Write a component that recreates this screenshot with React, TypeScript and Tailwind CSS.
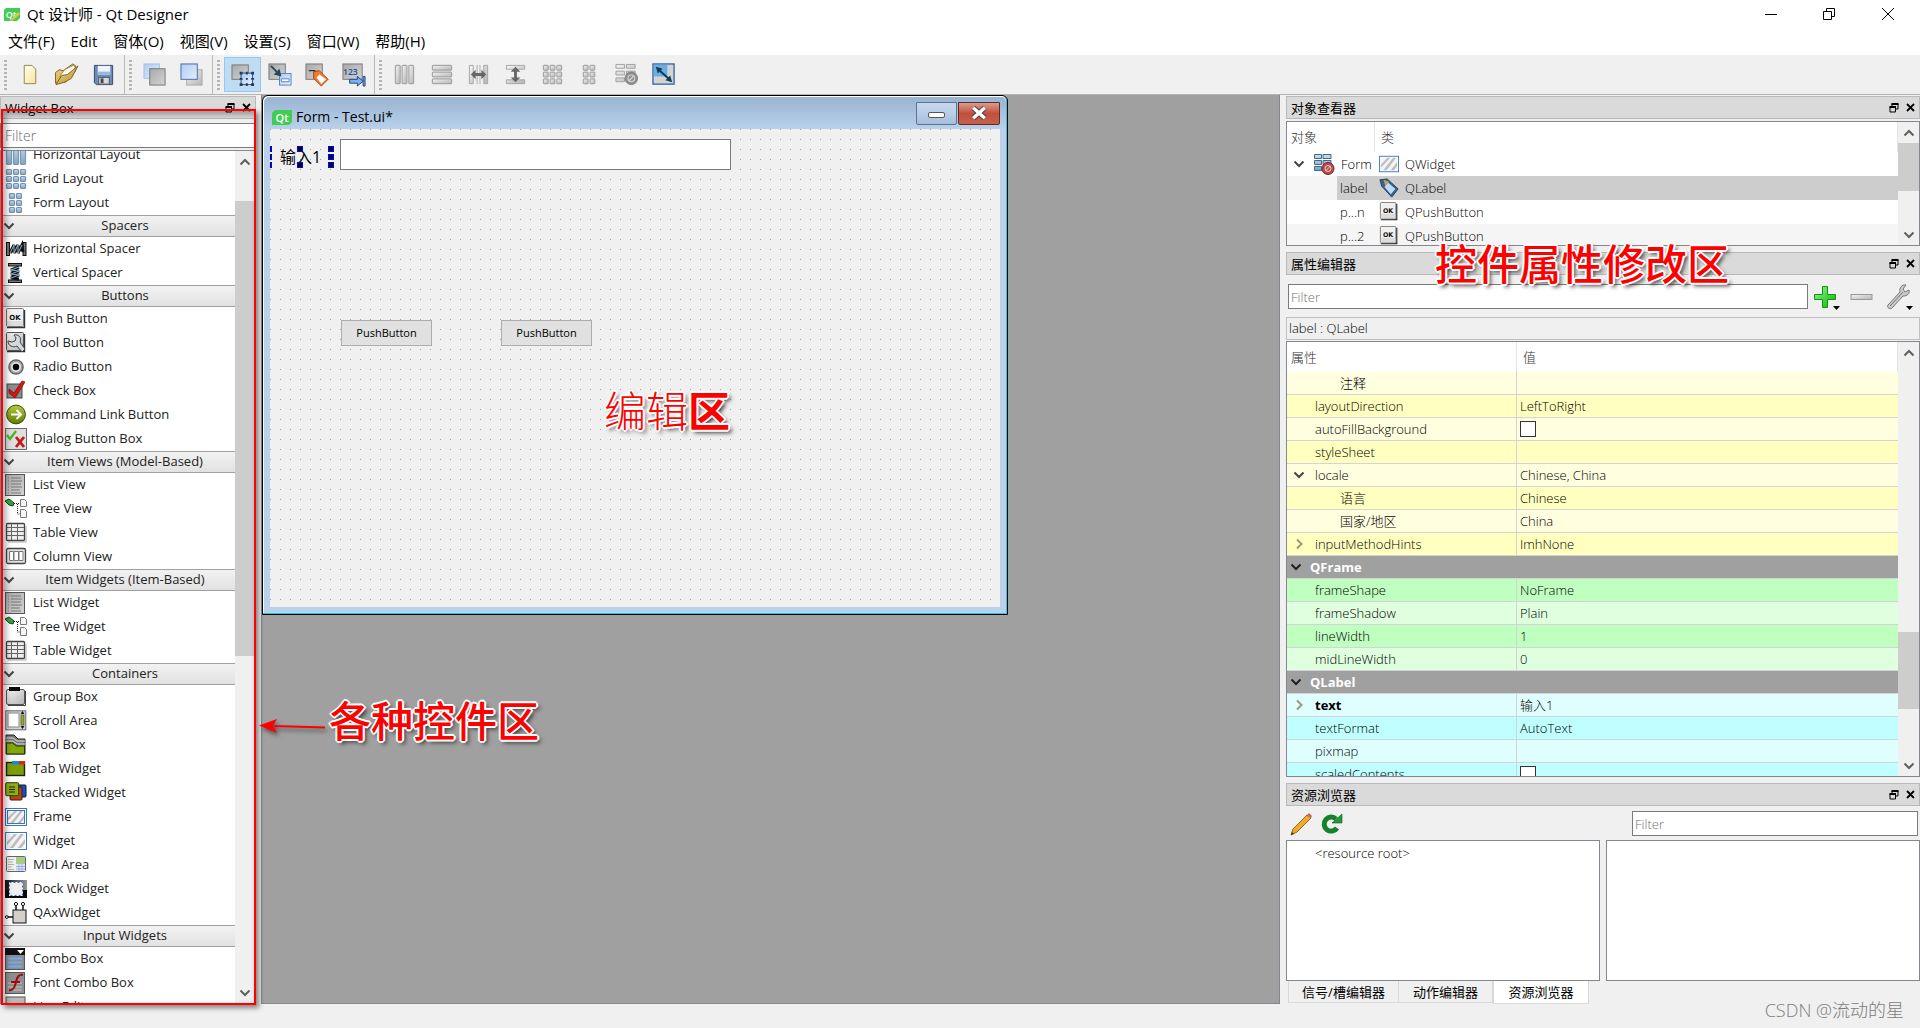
import React from "react";

type IconProps = { children: React.ReactNode; size?: string; box?: string };

const Svg = ({ children, size = "w-[22px] h-[22px]", box = "0 0 22 22" }: IconProps) => (
  <svg className={`${size} shrink-0`} viewBox={box} aria-hidden="true">
    {children}
  </svg>
);

const Gradients = () => (
  <svg className="absolute w-0 h-0" aria-hidden="true">
    <defs>
      <linearGradient id="gray" x1="0" y1="0" x2="1" y2="1">
        <stop offset="0" stopColor="#f4f4f4" />
        <stop offset="1" stopColor="#b4b4b4" />
      </linearGradient>
      <linearGradient id="mid" x1="0" y1="0" x2="1" y2="1">
        <stop offset="0" stopColor="#a8a8a8" />
        <stop offset="1" stopColor="#d4d4d4" />
      </linearGradient>
      <linearGradient id="blue" x1="0" y1="0" x2="1" y2="1">
        <stop offset="0" stopColor="#aecbf5" />
        <stop offset="1" stopColor="#e3efff" />
      </linearGradient>
      <linearGradient id="steel" x1="0" y1="0" x2="0" y2="1">
        <stop offset="0" stopColor="#c5ddef" />
        <stop offset="1" stopColor="#7fa3c4" />
      </linearGradient>
      <linearGradient id="page" x1="0" y1="0" x2="1" y2="1">
        <stop offset="0" stopColor="#fffef0" />
        <stop offset="1" stopColor="#f6e79a" />
      </linearGradient>
      <linearGradient id="gold" x1="0" y1="0" x2="1" y2="1">
        <stop offset="0" stopColor="#f5dc92" />
        <stop offset="1" stopColor="#b88a2c" />
      </linearGradient>
      <linearGradient id="lime" x1="0" y1="0" x2="0" y2="1">
        <stop offset="0" stopColor="#b3cc3a" />
        <stop offset="1" stopColor="#5f7d00" />
      </linearGradient>
      <linearGradient id="plus" x1="0" y1="0" x2="1" y2="1">
        <stop offset="0" stopColor="#9df58d" />
        <stop offset="1" stopColor="#00b400" />
      </linearGradient>
      <linearGradient id="dockbar" x1="0" y1="0" x2="1" y2="0">
        <stop offset="0" stopColor="#111" />
        <stop offset="1" stopColor="#999" />
      </linearGradient>
    </defs>
  </svg>
);

const Cells = ({ cols, rows, fill, stroke }: { cols: number; rows: number; fill: string; stroke: string }) => {
  const w = cols === 1 ? 20 : 5;
  const h = rows === 1 ? 19 : 5;
  const x0 = cols === 2 ? 4.5 : 1.5;
  const out: React.ReactNode[] = [];
  for (let c = 0; c < cols; c++)
    for (let r = 0; r < rows; r++)
      out.push(
        <rect key={`${c}-${r}`} x={x0 + c * 7} y={1.5 + r * 7} width={w} height={h} rx="1" fill={fill} stroke={stroke} strokeWidth="1.2" />,
      );
  return <>{out}</>;
};

const Stripes = ({ x, y, w, h }: { x: number; y: number; w: number; h: number }) => (
  <>
    <rect x={x} y={y} width={w} height={h} fill="#f4f4f4" />
    <path
      d={`M${x} ${y + h * 0.55}L${x + w * 0.4} ${y}h${w * 0.18}L${x} ${y + h * 0.8}zM${x + w * 0.15} ${y + h}L${x + w * 0.75} ${y}H${x + w * 0.93}L${x + w * 0.35} ${y + h}zM${x + w * 0.6} ${y + h}L${x + w} ${y + h * 0.35}V${y + h * 0.65}L${x + w * 0.8} ${y + h}z`}
      fill="#bdbdbd"
    />
  </>
);

const Icon = ({ name, size }: { name: string; size?: string }) => {
  const S = (c: React.ReactNode) => <Svg size={size}>{c}</Svg>;
  switch (name) {
    case "hlayout":
      return S(<Cells cols={3} rows={1} fill="url(#steel)" stroke="#7d97b3" />);
    case "grid":
      return S(<Cells cols={3} rows={3} fill="url(#steel)" stroke="#7690ae" />);
    case "form":
      return S(<Cells cols={2} rows={3} fill="url(#steel)" stroke="#7690ae" />);
    case "hspacer":
      return S(
        <>
          <rect x="1.5" y="4.5" width="3" height="13" fill="#777" stroke="#111" />
          <rect x="18" y="4.5" width="3" height="13" fill="#777" stroke="#111" />
          <path d="M5 15L9 7L9 15L13 7L13 15L17 7L18 14" fill="none" stroke="#111" strokeWidth="3" />
          <path d="M5 15L9 7L9 15L13 7L13 15L17 7" fill="none" stroke="#9db4c6" strokeWidth="1" />
        </>,
      );
    case "vspacer":
      return S(
        <>
          <rect x="3.5" y="1.5" width="13" height="2.5" fill="#777" stroke="#111" />
          <rect x="3.5" y="18" width="13" height="2.5" fill="#777" stroke="#111" />
          <path d="M14 5L6 8L14 9L6 12L14 13L6 16L14 17" fill="none" stroke="#111" strokeWidth="3" />
          <path d="M14 5L6 8L14 9L6 12L14 13L6 16" fill="none" stroke="#8fb3d0" strokeWidth="1" />
        </>,
      );
    case "push":
      return S(
        <>
          <path d="M2 19.500H19.500V2" fill="none" stroke="#333" strokeWidth="1.4" />
          <rect x="1.5" y=".5" width="17" height="18" rx="1" fill="#f0f0f0" stroke="#777" />
          <path d="M2 13h16v5H2z" fill="#dcdcdc" />
          <text x="10" y="12" fontSize="7" fontWeight="700" textAnchor="middle" fontFamily="DejaVu Sans" fill="#111">OK</text>
        </>,
      );
    case "tool":
      return S(
        <>
          <path d="M2 19.500H19.500V2" fill="none" stroke="#333" strokeWidth="1.4" />
          <rect x="1.5" y=".5" width="17" height="18" rx="1" fill="url(#gray)" stroke="#555" />
          <path d="M9 3c4-1 8 2 6 7l5 7-3 3-5-6c-4 2-9 0-9-5l4 1 3-1 1-3z" fill="#d3d9de" stroke="#444" />
        </>,
      );
    case "radio":
      return S(
        <>
          <circle cx="11" cy="11" r="7" fill="#e0e0e0" stroke="#666" strokeWidth="1.6" />
          <circle cx="11" cy="11" r="5.6" fill="none" stroke="#999" />
          <circle cx="11" cy="11" r="3.2" fill="#050505" />
        </>,
      );
    case "check":
      return S(
        <>
          <rect x="2" y="4" width="15" height="14" fill="#8c8c8c" stroke="#444" />
          <path d="M4 9l5 4L17 1l3 1L10 18 4 13z" fill="#d81515" stroke="#7c0909" strokeWidth=".7" />
        </>,
      );
    case "command":
      return S(
        <>
          <circle cx="11" cy="10.5" r="9.4" fill="url(#lime)" stroke="#3c4d08" />
          <path d="M6 10.500h9M11.500 6L16 10.500l-4.500 4.500" fill="none" stroke="#fff" strokeWidth="2" />
        </>,
      );
    case "dialog":
      return S(
        <>
          <rect x=".5" y=".5" width="21" height="21" fill="#dedede" stroke="#6b6b6b" />
          <path d="M2 7l3 4L11 3" fill="none" stroke="#51b52d" strokeWidth="2.400" />
          <path d="M11 9l8 10M19 9l-8 10" stroke="#c61a1a" strokeWidth="2.800" />
        </>,
      );
    case "list":
      return S(
        <>
          <rect x=".5" y=".5" width="19" height="21" fill="url(#mid)" stroke="#555" />
          <path d="M3 4h1M3 7h1M3 10h1M3 13h1M3 16h1M3 19h1M6 4h10M6 7h11M6 10h10M6 13h11M6 16h9M6 19h10" stroke="#777" />
        </>,
      );
    case "tree":
      return S(
        <>
          <path d="M0 3l4-2 5 4-1 3-4-1z" fill="#3f9f41" stroke="#0e4b10" />
          <path d="M9 5.500h6M12.500 6v10H16" fill="none" stroke="#222" strokeDasharray="1 1" />
          <path d="M15.500 1.500h4l2 2v5h-6zM15.500 11.500h4l2 2v6h-6z" fill="#f5f5f5" stroke="#777" />
        </>,
      );
    case "table":
      return S(
        <>
          <rect x="1.500" y="1.500" width="18" height="17" rx="1" fill="#eee" stroke="#444" strokeWidth="1.300" />
          <path d="M2 5.500h17M2 9.500h17M2 13.500h17M6.500 2v16M12.500 2v16" stroke="#666" />
          <path d="M3 20h18V4" fill="none" stroke="#aaa" />
        </>,
      );
    case "column":
      return S(
        <>
          <rect x="1.500" y="2.500" width="19" height="15" rx="1.500" fill="#e4e4e4" stroke="#444" strokeWidth="1.300" />
          <path d="M4.500 5.500h4v9h-4zM9 5.500h4.500v9H9zM14 5.500h4v9h-4z" fill="#fff" stroke="#777" />
        </>,
      );
    case "group":
      return S(
        <>
          <rect x="1.500" y="3.500" width="18" height="15" rx="1.500" fill="url(#gray)" stroke="#555" />
          <path d="M3 19.500h17.500V5" fill="none" stroke="#444" />
          <rect x="4" y="1" width="11" height="4" fill="#080808" />
        </>,
      );
    case "scroll":
      return S(
        <>
          <rect x=".8" y=".8" width="20" height="19" fill="#d5d5d5" stroke="#666" />
          <rect x="3" y="3" width="11" height="14" fill="#fff" stroke="#888" />
          <rect x="16" y="5" width="3" height="10" fill="#8bb320" stroke="#444" strokeWidth=".6" />
          <path d="M17.500 1l2 3h-4zM17.500 19l2-3h-4z" fill="#111" />
        </>,
      );
    case "toolbox":
      return S(
        <>
          <path d="M1 1h8l4 4h7v15H1z" fill="#777" stroke="#222" />
          <path d="M1 4h7l4 3h8M1 7h7l4 3h8" fill="none" stroke="#ddd" />
          <path d="M1.500 9h6l4 3h8v8h-18z" fill="#83a60a" stroke="#26330a" />
        </>,
      );
    case "tab":
      return S(
        <>
          <rect x="1.500" y="4.500" width="18" height="13" fill="#7f9f08" stroke="#1c2503" strokeWidth="1.400" />
          <rect x="7" y="3" width="7" height="3.500" fill="#168bd3" />
          <rect x="14" y="3" width="6" height="3.500" fill="#d22" />
        </>,
      );
    case "stacked":
      return S(
        <>
          <rect x="9" y="3" width="12" height="12" rx="1" fill="#1c4fc0" stroke="#06163e" />
          <rect x="5" y="5" width="12" height="13" rx="1" fill="#b44713" stroke="#43190a" />
          <rect x=".7" y=".7" width="13" height="13" rx="1" fill="#8eae17" stroke="#2b3906" />
          <path d="M4 5h6M4 7.500h6M4 10h6" stroke="#1c2600" strokeWidth="1.200" />
        </>,
      );
    case "frame":
      return S(
        <>
          <rect x=".5" y="2.500" width="21" height="17" fill="#fff" stroke="#3a76c4" />
          <rect x="2.500" y="4.500" width="17" height="13" fill="#fff" stroke="#3a76c4" />
          <Stripes x={3} y={5} w={16} h={12} />
        </>,
      );
    case "widget":
      return S(
        <>
          <rect x=".5" y="2.500" width="21" height="17" fill="#fff" stroke="#3a76c4" />
          <Stripes x={2} y={4} w={18} h={14} />
        </>,
      );
    case "mdi":
      return S(
        <>
          <rect x="1.500" y="2.500" width="19" height="15" rx="1" fill="#f0f0f0" stroke="#666" />
          <rect x="11" y="3" width="9" height="7" fill="#a7cf81" />
          <rect x="11" y="10" width="9" height="7" fill="#dfeaff" />
          <path d="M11 12.500h9M11 15h9M14 10v7M17 10v7" stroke="#86a8e0" strokeWidth=".8" />
          <path d="M3 5.500h6M3 8h5M3 10.500h6M3 13h4M3 15.500h6" stroke="#b5b5b5" />
        </>,
      );
    case "dock":
      return S(
        <>
          <rect x="0" y="2" width="22" height="18" fill="url(#dockbar)" />
          <path d="M0 12h22v8H0z" fill="#0a0a0a" />
          <rect x="4.500" y="4.500" width="13" height="13" fill="#eee" stroke="#fff" />
          <rect x="4.500" y="4.500" width="13" height="13" fill="none" stroke="#2f6fc1" strokeDasharray="2 2" />
        </>,
      );
    case "qax":
      return S(
        <>
          <rect x="8" y="8" width="13" height="13" fill="#d4d0c8" stroke="#111" />
          <circle cx="11" cy="2" r="1.600" fill="#fff" stroke="#111" />
          <circle cx="18" cy="2" r="1.600" fill="#fff" stroke="#111" />
          <circle cx="1.800" cy="15" r="1.400" fill="#fff" stroke="#111" />
          <path d="M11 4v4M18 4v4M3 15h5" stroke="#111" strokeWidth="1.500" />
        </>,
      );
    case "combo":
      return S(
        <>
          <rect x=".5" y=".5" width="19" height="21" fill="#8a8f96" stroke="#555" />
          <path d="M0 0h20v7H0z" fill="#111" />
          <path d="M12 2h7l-3.500 4z" fill="#fff" />
          <path d="M3 10.500h14M3 14.500h14M3 18.500h14" stroke="#78a9e6" strokeWidth="2" />
        </>,
      );
    case "fontcombo":
      return S(
        <>
          <rect x=".5" y=".5" width="19" height="21" fill="#8f8f8f" stroke="#555" />
          <path d="M3 11h14M3 15h14M3 18h14" stroke="#c4c4c4" />
          <path d="M18 3c-4-1-6 2-7 7s-3 9-7 8M6 10h9" fill="none" stroke="#a30b0b" strokeWidth="2" />
        </>,
      );
    case "line":
      return S(<rect x="1" y="1" width="19" height="18" fill="#bbb" stroke="#555" />);
    case "brokenlayout":
      return S(
        <>
          <path d="M1.500 1.500h7v4h-7zM10 1.500h8v4h-8zM1.500 7.500h7v4h-7zM10 7.500h8v4h-8zM1.500 13.500h7v4h-7z" fill="url(#steel)" stroke="#45678c" />
          <circle cx="15" cy="15.5" r="6" fill="#b94a48" stroke="#7c2220" />
          <circle cx="15" cy="15.5" r="3" fill="none" stroke="#f1d5d5" />
          <path d="M13 17.500l4-4" stroke="#f1d5d5" />
        </>,
      );
    case "label":
      return S(
        <>
          <path d="M1 2l8-1 12 11-7 9L3 9z" fill="#3d6285" stroke="#233c55" />
          <path d="M10 5l8 7-5 6-7-8z" fill="#b9defa" />
          <path d="M5 2l6 2-4 5z" fill="#c5a16a" />
        </>,
      );
    default:
      return null;
  }
};

const groups: { title?: string; items: [string, string][] }[] = [
  { items: [["hlayout", "Horizontal Layout"], ["grid", "Grid Layout"], ["form", "Form Layout"]] },
  { title: "Spacers", items: [["hspacer", "Horizontal Spacer"], ["vspacer", "Vertical Spacer"]] },
  {
    title: "Buttons",
    items: [
      ["push", "Push Button"],
      ["tool", "Tool Button"],
      ["radio", "Radio Button"],
      ["check", "Check Box"],
      ["command", "Command Link Button"],
      ["dialog", "Dialog Button Box"],
    ],
  },
  { title: "Item Views (Model-Based)", items: [["list", "List View"], ["tree", "Tree View"], ["table", "Table View"], ["column", "Column View"]] },
  { title: "Item Widgets (Item-Based)", items: [["list", "List Widget"], ["tree", "Tree Widget"], ["table", "Table Widget"]] },
  {
    title: "Containers",
    items: [
      ["group", "Group Box"],
      ["scroll", "Scroll Area"],
      ["toolbox", "Tool Box"],
      ["tab", "Tab Widget"],
      ["stacked", "Stacked Widget"],
      ["frame", "Frame"],
      ["widget", "Widget"],
      ["mdi", "MDI Area"],
      ["dock", "Dock Widget"],
      ["qax", "QAxWidget"],
    ],
  },
  { title: "Input Widgets", items: [["combo", "Combo Box"], ["fontcombo", "Font Combo Box"], ["line", "Line Edit"]] },
];

const Chevron = ({ dir = "down", color = "#444" }: { dir?: "down" | "up" | "right"; color?: string }) => (
  <svg className="w-3 h-3 shrink-0" viewBox="0 0 12 12" aria-hidden="true">
    <path
      d={dir === "down" ? "M1.500 3.500L6 8l4.500-4.500" : dir === "up" ? "M1.500 8.500L6 4l4.500 4.500" : "M4 1.500L8.500 6 4 10.500"}
      fill="none"
      stroke={color}
      strokeWidth="2"
    />
  </svg>
);

const ScrollBar = ({ width, before, thumb, after }: { width: string; before: string; thumb: string; after: string }) => (
  <div className={`${width} shrink-0 flex flex-col bg-[#f0f0f0]`}>
    <button aria-label="Scroll up" className="h-[21px] shrink-0 flex items-center justify-center">
      <Chevron dir="up" color="#606060" />
    </button>
    <div className={before} />
    <div className={`${thumb} bg-[#cdcdcd]`} />
    <div className={after} />
    <button aria-label="Scroll down" className="h-[21px] shrink-0 flex items-center justify-center">
      <Chevron color="#606060" />
    </button>
  </div>
);

const DockTitle = ({ children }: { children: string }) => (
  <div className="h-[23px] shrink-0 flex items-center border border-[#b9b9b9] bg-[#dadada] pl-1 text-[13px]">
    <h2 className="flex-1 leading-4">{children}</h2>
    <button aria-label="Float" className="w-[17px] flex justify-center">
      <svg className="w-[10px] h-[10px]" viewBox="0 0 10 10">
        <path d="M3 3V1h6v5H7M1 4h5.500v5H1z" fill="none" stroke="#000" />
        <path d="M2.500 1h7M.5 4h6.500" stroke="#000" strokeWidth="2" />
      </svg>
    </button>
    <button aria-label="Close" className="w-[17px] flex justify-center">
      <svg className="w-[9px] h-[9px]" viewBox="0 0 9 9">
        <path d="M1 1l7 7M8 1L1 8" stroke="#000" strokeWidth="1.800" />
      </svg>
    </button>
  </div>
);

const menus = ["文件(F)", "Edit", "窗体(O)", "视图(V)", "设置(S)", "窗口(W)", "帮助(H)"];

const toolGroups: { name: string; art: React.ReactNode; active?: boolean }[][] = [
  [
    { name: "New", art: <path d="M5.500 1.500h8l4 4v15h-12z" fill="url(#page)" stroke="#8f8455" /> },
    {
      name: "Open",
      art: (
        <>
          <path d="M-.5 20V9l4-3 4 1 10-7 3 2v5L10 19z" fill="url(#gold)" stroke="#7f5f20" />
          <path d="M4 13L9 6l10-5 1 3-6 10z" fill="#fffdf2" stroke="#a08040" strokeWidth=".8" />
          <path d="M0 21.500L6 12l6-1 11-9-7 13-7 4z" fill="url(#gold)" stroke="#7f5f20" />
        </>
      ),
    },
    {
      name: "Save",
      art: (
        <>
          <path d="M1.500 1.500h19v20h-17l-2-2z" fill="#6a8db5" stroke="#334a68" />
          <rect x="5" y="2" width="13" height="9" fill="#eef4fa" />
          <path d="M5 8h13v3H5z" fill="#8ebbdf" />
          <rect x="6" y="14" width="11" height="7" fill="#d8d8d8" stroke="#556" />
          <rect x="8" y="15" width="3" height="5" fill="#445" />
        </>
      ),
    },
  ],
  [
    {
      name: "Send to Back",
      art: (
        <>
          <rect x="0" y="0" width="16" height="15" fill="url(#blue)" stroke="#a9bedd" />
          <rect x="6" y="5" width="16" height="17" fill="url(#mid)" stroke="#777" />
        </>
      ),
    },
    {
      name: "Bring to Front",
      art: (
        <>
          <rect x="6" y="6" width="16" height="16" fill="url(#gray)" stroke="#aaa" />
          <rect x="0" y="0" width="17" height="16" fill="url(#blue)" stroke="#4669a4" />
        </>
      ),
    },
  ],
  [
    {
      name: "Edit Widgets",
      active: true,
      art: (
        <>
          <rect x="0" y="1" width="17" height="15" fill="url(#mid)" stroke="#777" />
          <rect x="9.500" y="9.500" width="12" height="12" fill="url(#blue)" stroke="#2c4c7c" />
          <path d="M8 8h3v3H8zM14.500 8h2v3h-2zM20 8h3v3h-3zM8 14.500h3v2H8zM20 14.500h3v2h-3zM8 20h3v3H8zM14.500 20h2v3h-2zM20 20h3v3h-3zM14.500 14.500h2v2h-2z" fill="#1f3c66" />
        </>
      ),
    },
    {
      name: "Edit Signals/Slots",
      art: (
        <>
          <rect x="0" y="0" width="17" height="16" fill="url(#mid)" stroke="#777" />
          <rect x="11" y="10" width="12" height="12" fill="url(#blue)" stroke="#5d83c0" />
          <path d="M13 15.500h8v3h-8z" fill="#fff" stroke="#5d83c0" />
          <path d="M2 2l8 8" stroke="#25485f" strokeWidth="2" />
          <path d="M13 13L5 11l6-6z" fill="#25485f" />
        </>
      ),
    },
    {
      name: "Edit Buddies",
      art: (
        <>
          <rect x="0" y="0" width="17" height="16" fill="url(#mid)" stroke="#777" />
          <path d="M3 7h6l3 3" fill="none" stroke="#333" strokeWidth="1.300" />
          <path d="M8 8l6-1 9 9-7 7-8-8z" fill="#f37a2c" stroke="#a34310" />
          <path d="M11 14l3-3 7 5-5 5z" fill="#fff" />
        </>
      ),
    },
    {
      name: "Edit Tab Order",
      art: (
        <>
          <rect x="0" y="0" width="20" height="16" fill="url(#mid)" stroke="#777" />
          <text x="0" y="12" fontSize="9" fontFamily="Open Sans" fontWeight="600" fill="#25519a">123</text>
          <path d="M7 16h8v-3l6 5-6 5v-3H7zM21 13h2v10h-2z" fill="#7db0ee" stroke="#1c4483" />
        </>
      ),
    },
  ],
  [
    { name: "Lay Out Horizontally", art: <Cells cols={3} rows={1} fill="url(#gray)" stroke="#a6a6a6" /> },
    { name: "Lay Out Vertically", art: <Cells cols={1} rows={3} fill="url(#gray)" stroke="#a6a6a6" /> },
    {
      name: "Lay Out Horizontally in Splitter",
      art: (
        <>
          <path d="M1.500 1.500h4v19h-4zM16.500 1.500h4v19h-4z" fill="url(#gray)" stroke="#a6a6a6" />
          <path d="M9.500 1v20M12.500 1v20" stroke="#aaa" />
          <path d="M3 11l5-5v3.500h6V6l5 5-5 5v-3.500H8V16z" fill="#666" />
        </>
      ),
    },
    {
      name: "Lay Out Vertically in Splitter",
      art: (
        <>
          <path d="M1.500 1.500h19v4h-19zM1.500 16.500h19v4h-19z" fill="url(#gray)" stroke="#a6a6a6" />
          <path d="M11 3l5 5h-3.500v6H16l-5 5-5-5h3.500V8H6z" fill="#666" />
        </>
      ),
    },
    { name: "Lay Out in a Grid", art: <Cells cols={3} rows={3} fill="url(#gray)" stroke="#a6a6a6" /> },
    { name: "Lay Out in a Form Layout", art: <Cells cols={2} rows={3} fill="url(#gray)" stroke="#a6a6a6" /> },
    {
      name: "Break Layout",
      art: (
        <>
          <path d="M0 .5h9v4H0zM11 .5h9v4h-9zM0 7.500h9v4H0zM11 7.500h9v4h-9zM0 14.500h9v4H0z" fill="url(#gray)" stroke="#a0a0a0" />
          <circle cx="16" cy="15" r="6.500" fill="#8f8f8f" stroke="#7d7d7d" />
          <circle cx="16" cy="15" r="3.500" fill="none" stroke="#d0d0d0" strokeWidth="1.300" />
          <path d="M13.500 17.500l5-5" stroke="#d0d0d0" strokeWidth="1.300" />
        </>
      ),
    },
    {
      name: "Adjust Size",
      art: (
        <>
          <rect x="0" y="0" width="22" height="21" fill="#d3d3d3" stroke="#3467a3" strokeWidth="1.400" />
          <rect x="1" y="1" width="14" height="12" fill="#6aaee4" />
          <path d="M6 6l11 10" stroke="#0f3f56" strokeWidth="2.200" />
          <path d="M3 3l7 2-5 5zM20 19l-7-2 5-5z" fill="#0f3f56" />
        </>
      ),
    },
  ],
];

type Row = { kind: "prop" | "group"; name: string; value?: string; bg: string; level?: number; open?: "down" | "right"; bold?: boolean; check?: boolean };
const Y1 = "bg-[#ffffdf]";
const Y2 = "bg-[#ffffbf]";
const G1 = "bg-[#bfffbf]";
const G2 = "bg-[#dfffdf]";
const C1 = "bg-[#dfffff]";
const C2 = "bg-[#bfffff]";
const GR = "bg-[#a0a0a0]";

const rows: Row[] = [
  { kind: "prop", name: "注释", bg: Y1, level: 2 },
  { kind: "prop", name: "layoutDirection", value: "LeftToRight", bg: Y2 },
  { kind: "prop", name: "autoFillBackground", check: true, bg: Y1 },
  { kind: "prop", name: "styleSheet", bg: Y2 },
  { kind: "prop", name: "locale", value: "Chinese, China", bg: Y1, open: "down" },
  { kind: "prop", name: "语言", value: "Chinese", bg: Y2, level: 2 },
  { kind: "prop", name: "国家/地区", value: "China", bg: Y1, level: 2 },
  { kind: "prop", name: "inputMethodHints", value: "ImhNone", bg: Y2, open: "right" },
  { kind: "group", name: "QFrame", bg: GR },
  { kind: "prop", name: "frameShape", value: "NoFrame", bg: G1 },
  { kind: "prop", name: "frameShadow", value: "Plain", bg: G2 },
  { kind: "prop", name: "lineWidth", value: "1", bg: G1 },
  { kind: "prop", name: "midLineWidth", value: "0", bg: G2 },
  { kind: "group", name: "QLabel", bg: GR },
  { kind: "prop", name: "text", value: "输入1", bg: C1, open: "right", bold: true },
  { kind: "prop", name: "textFormat", value: "AutoText", bg: C2 },
  { kind: "prop", name: "pixmap", bg: C1 },
  { kind: "prop", name: "scaledContents", check: true, bg: C2 },
];

const Handle = () => <span className="w-[6px] h-[6px] bg-black border border-[#0000ff]" />;

const note =
  "absolute z-20 whitespace-nowrap text-[42px] leading-[48px] text-[#ff0000] pointer-events-none [text-shadow:-1px_-1px_0_#fff,1px_-1px_0_#fff,-1px_1px_0_#fff,1px_1px_0_#fff,0_-2px_0_#fff,0_2px_0_#fff,-2px_0_0_#fff,2px_0_0_#fff,3px_3px_4px_#333]";

const QtBadge = ({ size }: { size: string }) => (
  <svg className={`${size} shrink-0`} viewBox="0 0 20 15" aria-hidden="true">
    <path d="M3 0h17v12l-3 3H0V3z" fill="#41cd52" />
    <text x="10" y="11.500" fontSize="11" textAnchor="middle" fontFamily="Open Sans" fontWeight="600" fill="#fff">Qt</text>
  </svg>
);

const WidgetBox = () => (
  <aside className="relative w-64 shrink-0 flex flex-col pt-px">
    <DockTitle>Widget Box</DockTitle>
    <input aria-label="Filter widgets" placeholder="Filter" className="mt-1 h-[25px] shrink-0 w-full border border-[#7a7a7a] bg-white pl-1 text-[14px] font-light outline-none placeholder:text-[#707070]" />
    <div className="mt-0.5 flex-1 min-h-0 flex border border-[#828790] bg-white overflow-hidden">
      <div className="flex-1 overflow-hidden">
        <div className="-mt-2">
          {groups.map((g, i) => (
            <section key={i}>
              {g.title && (
                <h3 className="h-[22px] flex items-center border-y border-[#a0a0a0] bg-linear-to-b from-[#f2f2f2] to-[#e2e2e2] pl-0.5 text-[13px] text-[#222]">
                  <Chevron />
                  <span className="flex-1 text-center">{g.title}</span>
                </h3>
              )}
              <ul>
                {g.items.map(([icon, label]) => (
                  <li key={label} className="h-6 flex items-center gap-1.5 pl-1 text-[13px] text-[#222]">
                    <Icon name={icon} />
                    {label}
                  </li>
                ))}
              </ul>
            </section>
          ))}
        </div>
      </div>
      <ScrollBar width="w-[20px]" before="h-[29px]" thumb="h-[455px]" after="flex-1" />
    </div>
    <div className="absolute left-px right-0 top-[14px] -bottom-px z-10 border-2 border-[#ff0000] pointer-events-none [box-shadow:3px_3px_5px_rgba(0,0,0,.45),inset_3px_3px_6px_rgba(0,0,0,.35)]" />
  </aside>
);

const FormWindow = () => (
  <section className="absolute left-0 top-0 w-[746px] h-[520px] flex flex-col rounded-t-md border border-black bg-[#b9d1ea] [box-shadow:inset_-1px_-1px_0_#2ec4e6,inset_1px_1px_0_#fff]">
    <header className="mx-px mt-px h-[32px] shrink-0 flex items-center rounded-t-md bg-linear-to-b from-[#99b4d1] to-[#b9d1ea] pl-2 pr-1.5">
      <div className="flex-1 flex items-center gap-1 pt-2">
        <QtBadge size="w-[20px] h-[15px]" />
        <h1 className="text-[14px] leading-5">Form - Test.ui*</h1>
      </div>
      <button aria-label="Minimize form" className="w-[41px] h-[23px] flex items-center justify-center rounded-b-xs border border-[#5d7391] bg-linear-to-b from-[#c6d8ec] via-[#b8cde6] via-50% to-[#a5bfdd]">
        <span className="mt-1 w-[17px] h-[6px] rounded-xs border border-[#555] bg-white" />
      </button>
      <button aria-label="Close form" className="ml-px w-[42px] h-[23px] flex items-center justify-center rounded-b-xs border border-[#5d2a2a] bg-linear-to-b from-[#d99a8f] via-[#c0503c] via-50% to-[#c4604c]">
        <svg className="w-5 h-3.5" viewBox="0 0 16 12">
          <path d="M3 1.500l10 9M13 1.500l-10 9" stroke="#4a3a3a" strokeWidth="4.500" />
          <path d="M3 1.500l10 9M13 1.500l-10 9" stroke="#fff" strokeWidth="3" />
        </svg>
      </button>
    </header>
    <div className="relative mx-[7px] mb-[7px] flex-1 bg-[#f0f0f0] bg-[conic-gradient(from_270deg_at_1px_1px,#a0a0a0_90deg,transparent_0)] bg-size-[10px_10px] overflow-hidden">
      <label htmlFor="entry" className="absolute left-[10px] top-4 text-[16px] leading-6">
        输入1
      </label>
      <div className="absolute -left-1 top-[17px] w-[68px] h-[22px] flex justify-between">
        <div className="flex flex-col justify-between"><Handle /><Handle /><Handle /></div>
        <div className="flex flex-col justify-between"><Handle /><Handle /></div>
        <div className="flex flex-col justify-between"><Handle /><Handle /><Handle /></div>
      </div>
      <input id="entry" className="absolute left-[70px] top-[10px] w-[391px] h-[31px] border border-[#7a7a7a] bg-white outline-none" />
      <button className="absolute left-[71px] top-[191px] w-[91px] h-[26px] border border-[#adadad] bg-[#e1e1e1] text-[11px]">PushButton</button>
      <button className="absolute left-[231px] top-[191px] w-[91px] h-[26px] border border-[#adadad] bg-[#e1e1e1] text-[11px]">PushButton</button>
    </div>
    <p className={`${note} left-[341px] top-[291px]`}>
      <span className="font-light">编辑</span>
      <span className="font-bold">区</span>
    </p>
  </section>
);

const ObjectInspector = () => (
  <div className="mt-0.5 h-[125px] shrink-0 flex border border-[#828790] bg-white overflow-hidden">
    <div className="flex-1 overflow-hidden">
      <table className="w-full table-fixed border-separate border-spacing-0 text-[13px] leading-5 font-light">
        <thead>
          <tr className="h-[30px] text-left text-[#333]">
            <th className="w-[88px] border-r border-[#e5e5e5] pl-1 font-light">对象</th>
            <th className="border-r border-[#e5e5e5] pl-1.5 font-light">类</th>
          </tr>
        </thead>
        <tbody>
          <tr className="h-6">
            <td className="p-0">
              <div className="flex items-center pl-1.5">
                <Chevron />
                <span className="ml-2 mr-1.5 flex"><Icon name="brokenlayout" /></span>
                Form
              </div>
            </td>
            <td className="p-0"><div className="flex items-center gap-1.5 pl-1"><Icon name="widget" size="w-5 h-5" />QWidget</div></td>
          </tr>
          <tr className="h-6">
            <td className="bg-[#f5f5f5] p-0 pl-[50px]"><div className="bg-[#cdcdcd] leading-6 pl-[3px]">label</div></td>
            <td className="bg-[#cdcdcd] p-0"><div className="flex items-center gap-1.5 pl-1"><Icon name="label" size="w-5 h-5" />QLabel</div></td>
          </tr>
          <tr className="h-6">
            <td className="p-0 pl-[53px]">p...n</td>
            <td className="p-0"><div className="flex items-center gap-1.5 pl-1"><Icon name="push" size="w-5 h-5" />QPushButton</div></td>
          </tr>
          <tr className="h-6 bg-[#f5f5f5]">
            <td className="p-0 pl-[53px]">p...2</td>
            <td className="p-0"><div className="flex items-center gap-1.5 pl-1"><Icon name="push" size="w-5 h-5" />QPushButton</div></td>
          </tr>
        </tbody>
      </table>
    </div>
    <ScrollBar width="w-[21px]" before="h-0" thumb="h-12" after="flex-1" />
  </div>
);

const PropertyEditor = () => (
  <>
    <div className="mt-[9px] h-[25px] shrink-0 flex items-center pl-0.5 pr-1.5">
      <input aria-label="Filter properties" placeholder="Filter" className="h-full flex-1 border border-[#7a7a7a] bg-white pl-0.5 text-[13px] font-light outline-none placeholder:text-[#707070]" />
      <button aria-label="Add property" className="ml-1.5 flex items-end">
        <Svg size="w-[26px] h-[26px]" box="0 0 26 26">
          <path d="M8.500 2.500h5v8h8v5h-8v8h-5v-8h-8v-5h8z" fill="url(#plus)" stroke="#0b9a0b" />
          <path d="M19 22h7l-3.500 4z" fill="#000" />
        </Svg>
      </button>
      <button aria-label="Remove property" className="ml-2.5">
        <Svg size="w-[24px] h-[24px]" box="0 0 24 24"><rect x="1" y="9.500" width="21" height="5" fill="url(#gray)" stroke="#999" /></Svg>
      </button>
      <button aria-label="Configure" className="ml-3">
        <Svg size="w-[28px] h-[28px]" box="0 0 28 28">
          <path d="M2 22L14 9c-1-4 2-8 6-7l-3 4 2 3 4-2c1 4-2 6-6 6L6 25c-2 2-6-1-4-3z" fill="#c9c9c9" stroke="#777" />
          <path d="M4 23L17 9" stroke="#777" />
          <path d="M20 23h7l-3.500 4z" fill="#000" />
        </Svg>
      </button>
    </div>
    <div className="mt-2 h-[23px] shrink-0 flex items-center border border-[#c0c0c0] pl-0.5 text-[13px] font-light">label : QLabel</div>
    <div className="mt-px flex-1 min-h-0 flex border border-[#828790] bg-white">
      <div className="flex-1 overflow-hidden">
        <table className="w-full table-fixed border-separate border-spacing-0 text-[13px] leading-5 font-light">
          <thead>
            <tr className="h-[30px] text-left text-[#333]">
              <th className="w-[230px] border-r border-[#e5e5e5] pl-1 font-light">属性</th>
              <th className="border-r border-[#e5e5e5] pl-1.5 font-light">值</th>
            </tr>
          </thead>
          <tbody>
            {rows.map((r) =>
              r.kind === "group" ? (
                <tr key={r.name} className={`h-[23px] ${r.bg}`}>
                  <th colSpan={2} className="border-b border-[#d4d4d4] p-0 text-left font-bold text-white">
                    <div className="flex items-center gap-2 pl-[3px]"><Chevron color="#222" />{r.name}</div>
                  </th>
                </tr>
              ) : (
                <tr key={r.name} className={`h-[23px] ${r.bg}`}>
                  <td className="border-r border-b border-[#d4d4d4] p-0">
                    <div className={`flex items-center ${r.level ? "pl-[53px]" : r.open ? "pl-1.5" : "pl-7"}`}>
                      {r.open && <span className="mr-2.5 flex"><Chevron dir={r.open} color={r.open === "right" ? "#999980" : "#444"} /></span>}
                      <span className={r.bold ? "font-bold" : ""}>{r.name}</span>
                    </div>
                  </td>
                  <td className="border-b border-[#d4d4d4] p-0 pl-[3px]">
                    {r.check ? <input type="checkbox" aria-label={r.name} className="block appearance-none size-4 border border-[#333] bg-white" /> : r.value}
                  </td>
                </tr>
              ),
            )}
          </tbody>
        </table>
      </div>
      <ScrollBar width="w-[21px]" before="flex-1" thumb="h-[77px]" after="h-[46px]" />
    </div>
  </>
);

const ResourceBrowser = () => (
  <>
    <div className="mt-[5px] h-[25px] shrink-0 flex items-center pl-1 pr-0.5">
      <button aria-label="Edit resources">
        <Svg size="w-6 h-6" box="0 0 24 24">
          <path d="M1 23l2-6L17 3l4 3L7 20z" fill="#f0a92d" stroke="#9c6a16" />
          <path d="M17 3l2-2 3 3-1 2z" fill="#c46a5a" />
          <path d="M1 23l1-3 2 2z" fill="#333" />
        </Svg>
      </button>
      <button aria-label="Reload" className="ml-1.5">
        <Svg size="w-6 h-6" box="0 0 24 24">
          <path d="M17 16a7 7 0 1 1-1-9" fill="none" stroke="#16812a" strokeWidth="5" />
          <path d="M12 11h10V2z" fill="#1f9a35" stroke="#0c5c1b" strokeWidth=".6" />
        </Svg>
      </button>
      <span className="flex-1" />
      <input aria-label="Filter resources" placeholder="Filter" className="h-full w-[286px] border border-[#7a7a7a] bg-white pl-0.5 text-[13px] font-light outline-none placeholder:text-[#707070]" />
    </div>
    <div className="mt-1 h-[141px] shrink-0 grid grid-cols-2 gap-1.5">
      <div className="border border-[#828790] bg-white pl-7 text-[13px] leading-6 font-light">&lt;resource root&gt;</div>
      <div className="border border-[#828790] bg-white" />
    </div>
    <nav className="h-[23px] shrink-0 flex items-start pl-0.5 text-[13px] leading-5">
      <button className="h-[22px] w-[111px] border border-t-0 border-[#d9d9d9]">信号/槽编辑器</button>
      <button className="h-[22px] w-[94px] border border-l-0 border-t-0 border-[#d9d9d9]">动作编辑器</button>
      <button className="h-[23px] w-[96px] border border-t-0 border-[#d9d9d9] bg-white">资源浏览器</button>
    </nav>
  </>
);

export default function App() {
  return (
    <div className="relative h-screen flex flex-col overflow-hidden bg-[#f0f0f0] text-black font-['Open_Sans','Noto_Sans_CJK_SC',sans-serif]">
      <Gradients />
      <header className="h-7 shrink-0 flex items-center bg-white pl-1 pr-0.5 text-[15px]">
        <svg className="w-[17px] h-[15px]" viewBox="0 0 17 15" aria-hidden="true">
          <path d="M2 1h14v10l-3 3H0V3z" fill="#41cd52" />
          <text x="7" y="10.500" fontSize="9" textAnchor="middle" fontFamily="Open Sans" fontWeight="600" fill="#fff">Qt</text>
          <path d="M6 14l8-9 2 2-8 7z" fill="#e9c443" />
        </svg>
        <span className="ml-1.5 flex-1">Qt 设计师 - Qt Designer</span>
        <button aria-label="Minimize" className="w-[58px] flex justify-center"><span className="w-3 h-px bg-black" /></button>
        <button aria-label="Restore" className="w-[58px] flex justify-center">
          <svg className="w-3 h-3" viewBox="0 0 12 12"><path d="M.5 3.500h8v8h-8zM3.500 3V.5h8v8H9" fill="none" stroke="#000" /></svg>
        </button>
        <button aria-label="Close" className="w-[60px] flex justify-center">
          <svg className="w-3 h-3" viewBox="0 0 12 12"><path d="M0 0l12 12M12 0L0 12" stroke="#000" /></svg>
        </button>
      </header>
      <nav className="h-[27px] shrink-0 flex items-center bg-white text-[15px]">
        {menus.map((m) => (
          <button key={m} className="px-2">{m}</button>
        ))}
      </nav>
      <div className="h-10 shrink-0 flex items-stretch border-b border-[#b4b4b4]">
        {toolGroups.map((g, i) => (
          <div key={i} className={`flex items-center pl-1 pr-[2px] ${i < 3 ? "border-r border-[#b8b8b8]" : ""}`}>
            <span className="mr-1 w-[3px] h-[30px] bg-[linear-gradient(#b4b4b4_50%,transparent_50%)] bg-size-[3px_4px]" />
            {g.map((t) => (
              <button key={t.name} aria-label={t.name} className={`w-[37px] h-[35px] flex items-center justify-center ${t.active ? "border border-[#90c8f6] bg-[#c0dcf3]" : ""}`}>
                <Svg size="w-6 h-6" box="-1 -1 25 25">{t.art}</Svg>
              </button>
            ))}
          </div>
        ))}
      </div>
      <main className="flex-1 min-h-0 flex">
        <WidgetBox />
        <div className="relative ml-[5px] mr-1.5 flex-1 overflow-hidden bg-[#a0a0a0] border border-t-0 border-[#828790]">
          <FormWindow />
          <p className={`${note} left-[67px] top-[602px] font-medium`}>各种控件区</p>
        </div>
        <div className="relative w-[634px] shrink-0 flex flex-col pt-px">
          <DockTitle>对象查看器</DockTitle>
          <ObjectInspector />
          <div className="h-1.5 shrink-0" />
          <DockTitle>属性编辑器</DockTitle>
          <PropertyEditor />
          <div className="h-1.5 shrink-0" />
          <DockTitle>资源浏览器</DockTitle>
          <ResourceBrowser />
          <p className={`${note} left-[149px] top-[145px] font-medium`}>控件属性修改区</p>
        </div>
      </main>
      <footer className="h-6 shrink-0 flex items-center justify-end pr-4">
        <span className="-mt-3 text-[18px] leading-5 font-light text-[#7c7c7c]">CSDN @流动的星</span>
      </footer>
      <svg className="absolute left-[258px] top-[715px] z-20 w-[70px] h-[24px] pointer-events-none drop-shadow-[2px_3px_2px_rgba(0,0,0,.5)]" viewBox="0 0 70 24" aria-hidden="true">
        <path d="M16 10l51 1.500v2L16 12z" fill="#f00" />
        <path d="M1 10.500L19 4l-4 7 4 7z" fill="#f00" />
      </svg>
    </div>
  );
}
